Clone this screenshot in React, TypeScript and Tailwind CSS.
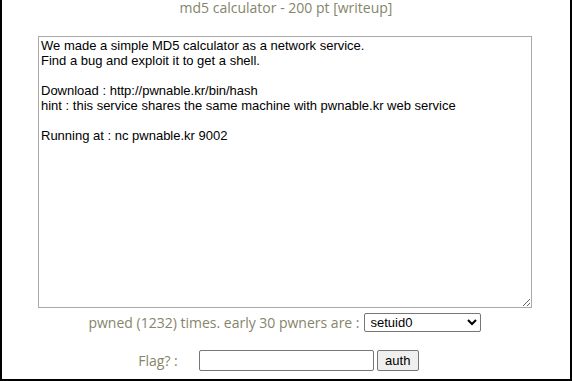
import React from "react";

const DESC = `We made a simple MD5 calculator as a network service.
Find a bug and exploit it to get a shell.

Download : http://pwnable.kr/bin/hash
hint : this service shares the same machine with pwnable.kr web service

Running at : nc pwnable.kr 9002`;

const PWNERS = ["setuid0", "ainsetin", "ipwnu", "hk"];

export default function App() {
  return (
    <div className="h-[381px] w-[572px] overflow-hidden bg-white">
      <div className="flex h-full flex-col border-x-2 border-b-2 border-black font-['Open_Sans',sans-serif] text-[#85856a]">
        <div className="h-[36px] text-center text-[14px] leading-[15px]">
          md5 calculator - 200 pt [writeup]
        </div>

        <div className="flex justify-center pr-[2px]">
          <textarea
            readOnly
            defaultValue={DESC}
            className="h-[272px] w-[494px] resize border border-[#a9a9a9] bg-white px-[2px] py-[1px] font-['Liberation_Sans',Arial,sans-serif] text-[13px] leading-[15px] text-black outline-none"
          />
        </div>

        <div className="mt-[4px] flex items-center justify-center gap-[4px] pr-[3px] text-[14px]">
          <span>pwned (1232) times. early 30 pwners are :</span>
          <select className="h-[19px] w-[117px] rounded-[2px] border border-[#767676] bg-white pl-[2px] font-['Liberation_Sans',Arial,sans-serif] text-[13px] text-black">
            {PWNERS.map((p) => (
              <option key={p}>{p}</option>
            ))}
          </select>
        </div>

        <div className="mt-[17px] flex items-center justify-center gap-[3px] pr-[15px] text-[14px]">
          <span className="mr-[18px]">Flag? :</span>
          <input
            type="text"
            className="h-[21px] w-[175px] rounded-[2px] border border-[#767676] bg-white px-[2px] font-['Liberation_Sans',Arial,sans-serif] text-[13px] text-black"
          />
          <button className="h-[21px] w-[42px] rounded-[2px] border border-[#767676] bg-[#efefef] font-['Liberation_Sans',Arial,sans-serif] text-[13px] text-black">
            auth
          </button>
        </div>
      </div>
    </div>
  );
}
